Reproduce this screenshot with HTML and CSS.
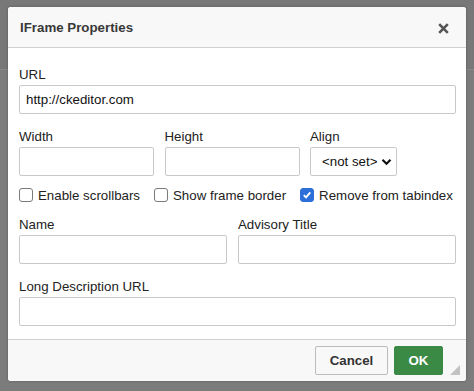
FILE: index.html
```html
<!DOCTYPE html>
<html lang="en">
<head>
<meta charset="UTF-8">
<title>IFrame Properties</title>
<link rel="stylesheet" href="styles.css">
</head>
<body>
<div class="page-bar"></div>

<div class="dialog">
  <div class="dialog-header">
    <span class="dialog-title">IFrame Properties</span>
    <span class="dialog-close">
      <svg width="11" height="11" viewBox="0 0 11 11"><path d="M1.2 1.2 L9.8 9.8 M9.8 1.2 L1.2 9.8" stroke="#555" stroke-width="2.6" stroke-linecap="butt"/></svg>
    </span>
  </div>

  <div class="dialog-body">
    <div class="field">
      <label>URL</label>
      <div class="text-input">http://ckeditor.com</div>
    </div>

    <div class="row row-three">
      <div class="field">
        <label>Width</label>
        <div class="text-input"></div>
      </div>
      <div class="field">
        <label>Height</label>
        <div class="text-input"></div>
      </div>
      <div class="field">
        <label>Align</label>
        <div class="select-box">
          <span>&lt;not set&gt;</span>
          <svg width="11" height="8" viewBox="0 0 11 8"><path d="M1.5 1.8 L5.5 5.8 L9.5 1.8" fill="none" stroke="#111" stroke-width="2.2"/></svg>
        </div>
      </div>
    </div>

    <div class="checks">
      <div class="check-item">
        <span class="check-box"></span>
        <span>Enable scrollbars</span>
      </div>
      <div class="check-item">
        <span class="check-box"></span>
        <span>Show frame border</span>
      </div>
      <div class="check-item">
        <span class="check-box checked">
          <svg width="10" height="10" viewBox="0 0 10 10"><path d="M1.8 5.2 L4 7.4 L8.3 2.3" fill="none" stroke="#fff" stroke-width="1.9"/></svg>
        </span>
        <span>Remove from tabindex</span>
      </div>
    </div>

    <div class="row row-two">
      <div class="field">
        <label>Name</label>
        <div class="text-input"></div>
      </div>
      <div class="field">
        <label>Advisory Title</label>
        <div class="text-input"></div>
      </div>
    </div>

    <div class="row field">
      <label>Long Description URL</label>
      <div class="text-input"></div>
    </div>
  </div>

  <div class="dialog-footer">
    <button class="btn btn-cancel">Cancel</button>
    <button class="btn btn-ok">OK</button>
    <span class="resize-handle"></span>
  </div>
</div>
</body>
</html>
```

FILE: styles.css
```css
html, body {
  margin: 0;
  padding: 0;
}

body {
  width: 474px;
  height: 391px;
  background-color: #7c7c7c;
  font-family: "Liberation Sans", Arial, sans-serif;
  font-size: 13.3px;
  color: #222;
  position: relative;
  overflow: hidden;
}

.page-bar {
  height: 69px;
  background-color: #787878;
  border-bottom: 1px solid #888;
}

/* the dialog floats over the editor page */
.dialog {
  position: absolute;
  left: 8px;
  top: 7px;
  width: 458px;
  height: 374px;
  background-color: #fff;
  border-radius: 3px;
  box-shadow: 0 0 3px rgba(0, 0, 0, 0.25);
  display: flex;
  flex-direction: column;
  overflow: hidden;
}

.dialog-header {
  height: 40px;
  background-color: #f8f8f8;
  border-bottom: 1px solid #d1d1d1;
  display: flex;
  align-items: center;
  justify-content: space-between;
  padding: 0 17px 0 12px;
}

.dialog-title {
  font-weight: bold;
  color: #383838;
  font-size: 13.3px;
}

.dialog-close {
  display: flex;
  margin-top: 3px;
}

.dialog-body {
  flex: 1;
  padding: 19px 10px 0 11px;
}

.field label {
  display: block;
  height: 16px;
  line-height: 16px;
  margin-bottom: 2px;
  color: #222;
}

.text-input {
  height: 27px;
  line-height: 27px;
  border: 1px solid #c9c9c9;
  border-radius: 2px;
  padding: 0 6px;
  color: #111;
  background-color: #fff;
}

.row {
  margin-top: 15px;
}

.row-three {
  display: grid;
  grid-template-columns: 135px 135px 87px;
  column-gap: 10.5px;
}

.row-two {
  display: grid;
  grid-template-columns: 208px 218px;
  column-gap: 11px;
  margin-top: 14px;
}

.select-box {
  height: 27px;
  border: 1px solid #c9c9c9;
  border-radius: 2px;
  display: flex;
  align-items: center;
  justify-content: space-between;
  padding: 0 4px 0 11px;
  color: #111;
}

.checks {
  display: flex;
  margin-top: 11px;
  height: 16px;
  align-items: center;
  white-space: nowrap;
}

.check-item {
  display: flex;
  align-items: center;
  flex-shrink: 0;
  gap: 5px;
  margin-right: 14px;
}

.check-box {
  width: 12px;
  height: 12px;
  border: 1px solid #7a7a7a;
  border-radius: 3px;
  background-color: #fff;
  display: flex;
  align-items: center;
  justify-content: center;
}

.check-box.checked {
  background-color: #2c6fd8;
  border-color: #2c6fd8;
}

.dialog-footer {
  height: 35px;
  border-top: 1px solid #d1d1d1;
  background-color: #f8f8f8;
  padding: 6px 23px 0 0;
  display: flex;
  justify-content: flex-end;
  align-items: flex-start;
  gap: 6px;
  position: relative;
}

.btn {
  height: 29px;
  border-radius: 2px;
  font-family: "Liberation Sans", Arial, sans-serif;
  font-size: 13.3px;
  font-weight: bold;
  padding: 0;
  cursor: pointer;
}

.btn-cancel {
  width: 73px;
  background-color: #f8f8f8;
  border: 1px solid #bcbcbc;
  color: #333;
}

.btn-ok {
  width: 49px;
  background-color: #3a8a46;
  border: 1px solid #3a8a46;
  color: #fff;
}

.resize-handle {
  position: absolute;
  right: 6px;
  bottom: 6px;
  width: 0;
  height: 0;
  border-left: 10px solid transparent;
  border-bottom: 10px solid #c2c2c2;
}
```
